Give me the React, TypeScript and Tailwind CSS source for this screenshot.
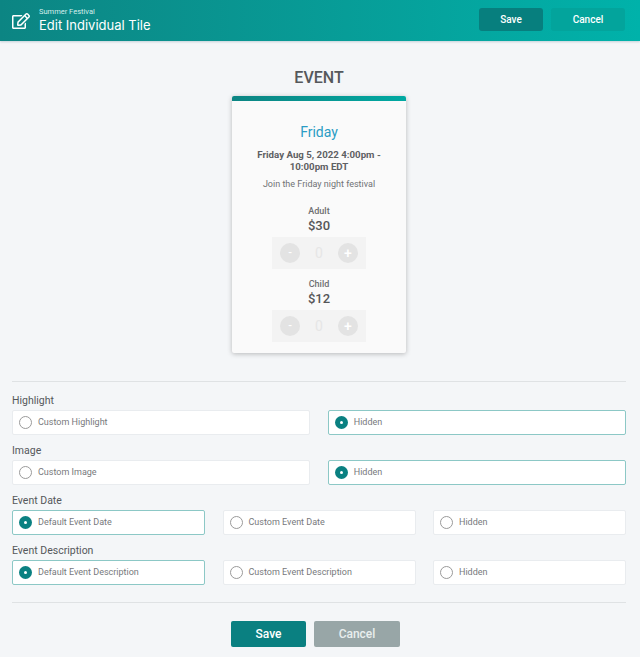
import React from 'react';
import { FaRegEdit } from 'react-icons/fa';

const Radio = ({ label, selected = false }: { label: string; selected?: boolean }) => (
    <div className={`h-[25px] flex items-center pl-[6px] bg-white rounded-[2px] border ${selected ? 'border-[#8cc8c6]' : 'border-[#e9ecef]'}`}>
        {selected ? (
            <span className="w-[13px] h-[13px] rounded-full bg-[#0a8081] flex items-center justify-center shrink-0">
                <span className="w-[3px] h-[3px] rounded-full bg-white"></span>
            </span>
        ) : (
            <span className="w-[13px] h-[13px] rounded-full border-[1.5px] border-[#9a9a9a] shrink-0"></span>
        )}
        <span className="ml-[6px] text-[9px] text-[#77797c]">{label}</span>
    </div>
);

const Ticket = ({ name, price }: { name: string; price: string }) => (
    <div className="flex flex-col items-center">
        <div className="text-[9px] leading-[12px] font-medium text-[#6d6e70]">{name}</div>
        <div className="text-[13px] leading-[16px] font-medium text-[#555658] mt-[1px]">{price}</div>
        <div className="mt-[3px] w-[94px] h-[32px] bg-[#f3f3f3] flex items-center justify-between px-[8px]">
            <span className="w-[20px] h-[20px] rounded-full bg-[#e3e3e3] text-white text-[11px] font-medium flex items-center justify-center">-</span>
            <span className="text-[14px] text-[#e6e6e6]">0</span>
            <span className="w-[20px] h-[20px] rounded-full bg-[#e3e3e3] text-white text-[14px] font-medium flex items-center justify-center">+</span>
        </div>
    </div>
);

const Field = ({ label, children, cols }: { label: string; children: React.ReactNode; cols: 2 | 3 }) => (
    <div>
        <div className="text-[10.5px] leading-[14px] text-[#55585b]">{label}</div>
        <div className={`mt-[2px] grid gap-x-[17.5px] ${cols === 2 ? 'grid-cols-2' : 'grid-cols-3'}`}>{children}</div>
    </div>
);

export default function App() {
    return (
        <div className="w-[640px] h-[657px] overflow-hidden bg-[#f4f6f8] font-['Roboto',sans-serif] flex flex-col">
            {/* Header */}
            <div className="h-[41px] shrink-0 bg-gradient-to-r from-[#0c8583] to-[#00b2aa] flex items-center pl-[12px] pr-[15px] shadow-[0_1px_2px_rgba(0,60,90,0.2)]">
                <FaRegEdit className="w-[18px] h-[16px] text-white" />
                <div className="ml-[9px] text-white -mt-[2px]">
                    <div className="text-[7.5px] leading-[10px] text-[#d3eeec]">Summer Festival</div>
                    <div className="text-[13px] leading-[16px] font-['Inter',sans-serif]">Edit Individual Tile</div>
                </div>
                <div className="ml-auto flex items-center gap-[8px] -mt-[2px]">
                    <div className="w-[64px] h-[23px] rounded-[3px] bg-[#077f7e] text-white text-[10px] font-medium flex items-center justify-center">Save</div>
                    <div className="w-[74px] h-[23px] rounded-[3px] bg-[#03a49c] text-white text-[10px] font-medium flex items-center justify-center">Cancel</div>
                </div>
            </div>

            {/* Preview */}
            <div className="flex flex-col items-center pt-[27px] pr-[2px]">
                <div className="text-[16px] leading-[20px] font-medium text-[#55585b]">EVENT</div>
                <div className="mt-[8px] w-[174px] h-[257px] bg-[#fafafa] rounded-[2px] shadow-[0_1px_5px_rgba(0,0,0,0.25)] overflow-hidden flex flex-col items-center">
                    <div className="w-full h-[5px] shrink-0 bg-gradient-to-r from-[#0c8583] to-[#00a9a2]"></div>
                    <div className="mt-[22px] text-[14px] leading-[18px] text-[#2b9cc4]">Friday</div>
                    <div className="mt-[8px] w-[150px] text-center text-[9.7px] leading-[11.5px] font-bold text-[#5e6063]">Friday Aug 5, 2022 4:00pm - 10:00pm EDT</div>
                    <div className="mt-[7px] text-[9px] leading-[11px] text-[#707275]">Join the Friday night festival</div>
                    <div className="mt-[15px]">
                        <Ticket name="Adult" price="$30" />
                    </div>
                    <div className="mt-[9px]">
                        <Ticket name="Child" price="$12" />
                    </div>
                </div>
            </div>

            {/* Options */}
            <div className="ml-[12px] mr-[14px] mt-[28px] border-t border-[#dfe2e4]"></div>
            <div className="pl-[12px] pr-[14px] pt-[12px] flex flex-col gap-[9px]">
                <Field label="Highlight" cols={2}>
                    <Radio label="Custom Highlight" />
                    <Radio label="Hidden" selected />
                </Field>
                <Field label="Image" cols={2}>
                    <Radio label="Custom Image" />
                    <Radio label="Hidden" selected />
                </Field>
                <Field label="Event Date" cols={3}>
                    <Radio label="Default Event Date" selected />
                    <Radio label="Custom Event Date" />
                    <Radio label="Hidden" />
                </Field>
                <Field label="Event Description" cols={3}>
                    <Radio label="Default Event Description" selected />
                    <Radio label="Custom Event Description" />
                    <Radio label="Hidden" />
                </Field>
            </div>
            <div className="ml-[12px] mr-[14px] mt-[17px] border-t border-[#dfe2e4]"></div>

            <div className="mt-[18px] pr-[9px] flex justify-center gap-[8px]">
                <div className="w-[75px] h-[26px] rounded-[2px] bg-[#0a8081] text-white text-[12px] font-medium flex items-center justify-center">Save</div>
                <div className="w-[86px] h-[26px] rounded-[2px] bg-[#98a6a7] text-[#e8eeee] text-[12px] font-medium flex items-center justify-center">Cancel</div>
            </div>
        </div>
    );
}
